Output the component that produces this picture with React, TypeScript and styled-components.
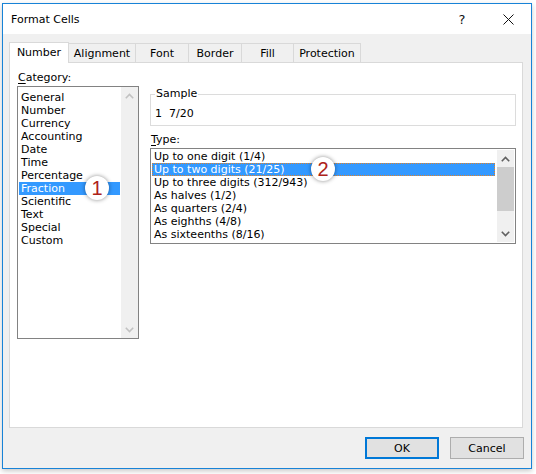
import React from "react";
import styled, { createGlobalStyle } from "styled-components";

const Global = createGlobalStyle`
  html, body { margin: 0; padding: 0; background: #ffffff; }
  body { font-family: "DejaVu Sans", "Noto Sans", sans-serif; }
  * { box-sizing: border-box; }
`;

const Page = styled.div`
  width: 536px;
  height: 474px;
  padding: 3px 0 0 2px;
  background: #ffffff;
`;

const Window = styled.div`
  width: 530px;
  height: 466px;
  border: 1px solid #1883d7;
  background: #f0f0f0;
  box-shadow: 0 2px 5px rgba(0, 0, 0, 0.22);
  display: flex;
  flex-direction: column;
  font-family: "DejaVu Sans", "Noto Sans", sans-serif;
  font-size: 11px;
  color: #000;
`;

const TitleBar = styled.div`
  height: 30px;
  background: #ffffff;
  display: flex;
  align-items: center;
  padding-left: 8px;
`;

const Title = styled.div`
  flex: 1;
  font-size: 11px;
  color: #000;
`;

const CaptionButton = styled.div`
  width: 46px;
  height: 30px;
  display: flex;
  align-items: center;
  justify-content: center;
  font-size: 13px;
  color: #111;
`;

const Body = styled.div`
  flex: 1;
  display: flex;
  flex-direction: column;
  padding: 8px 8px 0 6px;
`;

const TabStrip = styled.div`
  display: flex;
  align-items: flex-end;
  height: 20px;
  position: relative;
  z-index: 1;
`;

const Tab = styled.div<{ $w: number; $active?: boolean }>`
  width: ${(p) => p.$w}px;
  height: ${(p) => (p.$active ? 21 : 19)}px;
  margin-left: -1px;
  margin-bottom: ${(p) => (p.$active ? -1 : 0)}px;
  border: 1px solid #d9d9d9;
  border-bottom: none;
  background: ${(p) => (p.$active ? "#ffffff" : "#f0f0f0")};
  display: flex;
  align-items: center;
  justify-content: center;
  padding-bottom: ${(p) => (p.$active ? 2 : 0)}px;
  font-size: 11px;
  &:first-child { margin-left: 0; }
`;

const Panel = styled.div`
  height: 366px;
  border: 1px solid #d9d9d9;
  background: #ffffff;
  display: flex;
  padding: 7px 6px 0 7px;
`;

const LeftCol = styled.div`
  width: 122px;
  display: flex;
  flex-direction: column;
`;

const RightCol = styled.div`
  width: 366px;
  margin-left: 11px;
  display: flex;
  flex-direction: column;
`;

const Label = styled.div<{ $mt?: number }>`
  height: 16px;
  line-height: 16px;
  padding-left: 1px;
  margin-top: ${(p) => p.$mt ?? 0}px;
  font-size: 11px;
  u { text-decoration: underline; text-underline-offset: 2px; }
`;

const ListBox = styled.div<{ $h: number }>`
  height: ${(p) => p.$h}px;
  border: 1px solid #828282;
  background: #ffffff;
  display: flex;
`;

const Items = styled.div<{ $pt: number }>`
  flex: 1;
  padding-top: ${(p) => p.$pt}px;
  display: flex;
  flex-direction: column;
`;

const Item = styled.div<{ $sel?: boolean; $focus?: boolean }>`
  position: relative;
  height: 13px;
  line-height: 13px;
  margin: 0 1px;
  padding-left: 2px;
  white-space: nowrap;
  font-size: 11px;
  background: ${(p) => (p.$sel ? "#3399ff" : "transparent")};
  color: ${(p) => (p.$sel ? "#ffffff" : "#000000")};
  outline: ${(p) => (p.$focus ? "1px dotted #e0822a" : "none")};
  outline-offset: -1px;
`;

const ScrollBar = styled.div<{ $inset: number }>`
  width: 17px;
  margin: ${(p) => p.$inset}px;
  background: #f0f0f0;
  display: flex;
  flex-direction: column;
`;

const ArrowBox = styled.div`
  height: 17px;
  display: flex;
  align-items: center;
  justify-content: center;
`;

const Track = styled.div`
  flex: 1;
  display: flex;
  flex-direction: column;
`;

const Thumb = styled.div<{ $h: number }>`
  height: ${(p) => p.$h}px;
  background: #cdcdcd;
`;

const Badge = styled.div<{ $left: number }>`
  position: absolute;
  left: ${(p) => p.$left}px;
  top: -6px;
  width: 24px;
  height: 24px;
  border-radius: 50%;
  background: #ffffff;
  box-shadow: 0 0 4px rgba(0, 0, 0, 0.45);
  color: #ad2219;
  font-family: "Liberation Sans", "Noto Sans", sans-serif;
  font-size: 20px;
  line-height: 24px;
  text-align: center;
  z-index: 2;
`;

const SampleGroup = styled.fieldset`
  margin: 16px 0 0 0;
  padding: 4px 4px 3px 3px;
  border: 1px solid #dcdcdc;
  min-width: 0;
`;

const Legend = styled.legend`
  padding: 0 1px;
  margin-left: 1px;
  line-height: 16px;
  font-size: 11px;
`;

const SampleValue = styled.div`
  height: 16px;
  line-height: 16px;
  padding-left: 1px;
  font-size: 11px;
  white-space: pre;
`;

const ButtonRow = styled.div`
  display: flex;
  justify-content: flex-end;
  gap: 11px;
  margin-top: 9px;
  margin-right: -1px;
`;

const Button = styled.div<{ $default?: boolean }>`
  width: 74px;
  height: 22px;
  background: #e1e1e1;
  border: ${(p) => (p.$default ? "2px solid #0078d7" : "1px solid #adadad")};
  display: flex;
  align-items: center;
  justify-content: center;
  font-size: 11px;
`;

const Chevron = ({ up, color }: { up?: boolean; color: string }) => (
  <svg width="9" height="6" viewBox="0 0 9 6">
    <path
      d={up ? "M0.8 5.2 L4.5 1.5 L8.2 5.2" : "M0.8 0.8 L4.5 4.5 L8.2 0.8"}
      fill="none"
      stroke={color}
      strokeWidth="1.6"
    />
  </svg>
);

const CloseIcon = () => (
  <svg width="11" height="11" viewBox="0 0 11 11">
    <path d="M0.5 0.5 L10.5 10.5 M10.5 0.5 L0.5 10.5" stroke="#111" strokeWidth="1" fill="none" />
  </svg>
);

const tabs: [string, number][] = [
  ["Number", 60],
  ["Alignment", 68],
  ["Font", 54],
  ["Border", 54],
  ["Fill", 53],
  ["Protection", 68],
];

const categories = [
  "General",
  "Number",
  "Currency",
  "Accounting",
  "Date",
  "Time",
  "Percentage",
  "Fraction",
  "Scientific",
  "Text",
  "Special",
  "Custom",
];

const types = [
  "Up to one digit (1/4)",
  "Up to two digits (21/25)",
  "Up to three digits (312/943)",
  "As halves (1/2)",
  "As quarters (2/4)",
  "As eighths (4/8)",
  "As sixteenths (8/16)",
];

export default function App() {
  return (
    <>
      <Global />
      <Page>
        <Window>
          <TitleBar>
            <Title>Format Cells</Title>
            <CaptionButton>?</CaptionButton>
            <CaptionButton>
              <CloseIcon />
            </CaptionButton>
          </TitleBar>
          <Body>
            <TabStrip>
              {tabs.map(([t, w], i) => (
                <Tab key={t} $w={w} $active={i === 0}>
                  {t}
                </Tab>
              ))}
            </TabStrip>
            <Panel>
              <LeftCol>
                <Label>
                  <u>C</u>ategory:
                </Label>
                <ListBox $h={253}>
                  <Items $pt={4}>
                    {categories.map((c) => (
                      <Item key={c} $sel={c === "Fraction"}>
                        {c}
                        {c === "Fraction" && <Badge $left={66}>1</Badge>}
                      </Item>
                    ))}
                  </Items>
                  <ScrollBar $inset={0}>
                    <ArrowBox>
                      <Chevron up color="#c2c2c2" />
                    </ArrowBox>
                    <Track />
                    <ArrowBox>
                      <Chevron color="#c2c2c2" />
                    </ArrowBox>
                  </ScrollBar>
                </ListBox>
              </LeftCol>
              <RightCol>
                <SampleGroup>
                  <Legend>Sample</Legend>
                  <SampleValue>{"1  7/20"}</SampleValue>
                </SampleGroup>
                <Label $mt={6}>
                  <u>T</u>ype:
                </Label>
                <ListBox $h={96}>
                  <Items $pt={1}>
                    {types.map((t, i) => (
                      <Item key={t} $sel={i === 1} $focus={i === 1}>
                        {t}
                        {i === 1 && <Badge $left={159}>2</Badge>}
                      </Item>
                    ))}
                  </Items>
                  <ScrollBar $inset={1}>
                    <ArrowBox>
                      <Chevron up color="#606060" />
                    </ArrowBox>
                    <Track>
                      <Thumb $h={44} />
                    </Track>
                    <ArrowBox>
                      <Chevron color="#606060" />
                    </ArrowBox>
                  </ScrollBar>
                </ListBox>
              </RightCol>
            </Panel>
            <ButtonRow>
              <Button $default>OK</Button>
              <Button>Cancel</Button>
            </ButtonRow>
          </Body>
        </Window>
      </Page>
    </>
  );
}
